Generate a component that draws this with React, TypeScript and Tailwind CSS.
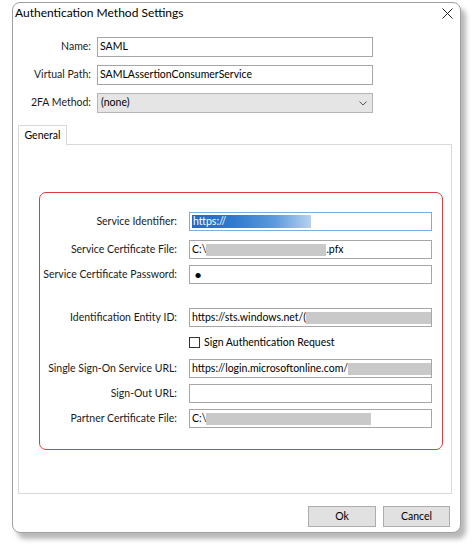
import React from "react";

function Field({ children, focus, gray, w = "w-[243px]", h = "h-[19px]" }: { children?: React.ReactNode; focus?: boolean; gray?: boolean; w?: string; h?: string }) {
  return (
    <div
      className={`${w} ${h} border flex items-center pl-[2px] overflow-hidden whitespace-nowrap text-[10.5px] text-black ${
        focus ? "border-[#7aaee0]" : "border-[#a6a6a6]"
      } ${gray ? "bg-[#e6e6e6]" : "bg-white"}`}
    >
      {children}
    </div>
  );
}

function Blur({ w }: { w: string }) {
  return <span className={`inline-block h-[12px] bg-[#c9c9c9] blur-[0.6px] ${w}`} />;
}

function Row({ label, children, mt }: { label: string; children: React.ReactNode; mt: string }) {
  return (
    <div className={`flex items-center ${mt}`}>
      <div className="w-[137px] text-right text-[10.5px] text-[#1a1a1a] whitespace-nowrap">{label}</div>
      <div className="ml-[12px]">{children}</div>
    </div>
  );
}

function TopRow({ label, children }: { label: string; children: React.ReactNode }) {
  return (
    <div className="flex items-center">
      <div className="w-[78px] text-right text-[10.5px] text-[#1a1a1a] whitespace-nowrap">{label}</div>
      <div className="ml-[6px]">{children}</div>
    </div>
  );
}

export default function App() {
  return (
    <div className="w-[474px] h-[549px] bg-white overflow-hidden pt-[2px] pl-[12px] font-['Lato','Noto_Sans',sans-serif]">
      <div className="w-[449px] h-[531px] border border-[#a0a0a0] rounded-[8px] bg-white shadow-[5px_6px_5px_rgba(0,0,0,0.28)] flex flex-col">
        {/* title bar */}
        <div className="h-[18px] flex items-center justify-between pl-[2px] pr-[6px] pt-[2px]">
          <span className="text-[12px] text-black">Authentication Method Settings</span>
          <svg width="11" height="11" viewBox="0 0 11 11" className="mr-[1px]">
            <path d="M0.5 0.5 L10.5 10.5 M10.5 0.5 L0.5 10.5" stroke="#222" strokeWidth="1" />
          </svg>
        </div>

        {/* top form */}
        <div className="mt-[16px] flex flex-col gap-[8px]">
          <TopRow label="Name:">
            <Field w="w-[276px]" h="h-[20px]">SAML</Field>
          </TopRow>
          <TopRow label="Virtual Path:">
            <Field w="w-[276px]" h="h-[20px]">SAMLAssertionConsumerService</Field>
          </TopRow>
          <TopRow label="2FA Method:">
            <div className="w-[276px] h-[20px] border border-[#b5b5b5] bg-[#e5e5e5] flex items-center justify-between pl-[3px] pr-[5px] text-[10.5px] text-black">
              <span>(none)</span>
              <svg width="8" height="5" viewBox="0 0 8 5">
                <path d="M0.5 0.5 L4 4 L7.5 0.5" stroke="#555" strokeWidth="1" fill="none" />
              </svg>
            </div>
          </TopRow>
        </div>

        {/* tab */}
        <div className="mt-[12px] ml-[5px] flex flex-col">
          <div className="w-[49px] h-[20px] border border-b-0 border-[#d9d9d9] bg-white flex items-center justify-center text-[10.5px] text-black relative z-10 mb-[-1px]">
            General
          </div>
          <div className="w-[434px] h-[350px] border border-[#d9d9d9] bg-white pt-[47px] pl-[20px]">
            <div className="w-[404px] h-[258px] border-[1.5px] border-[#e0393f] rounded-[7px] flex flex-col">
              <Row label="Service Identifier:" mt="mt-[19px]">
                <Field focus>
                  <span className="h-[13px] w-[119px] flex items-center text-white pl-[1px] bg-[linear-gradient(90deg,#1f6cc4_0%,#2f7ad0_35%,#5d9bdc_70%,#b8d2ef_100%)]">
                    https://
                  </span>
                </Field>
              </Row>
              <Row label="Service Certificate File:" mt="mt-[9px]">
                <Field>
                  <span>C:\</span>
                  <Blur w="w-[120px]" />
                  <span>.pfx</span>
                </Field>
              </Row>
              <Row label="Service Certificate Password:" mt="mt-[6px]">
                <Field>
                  <span className="ml-[2px] text-[14px] leading-none">•</span>
                </Field>
              </Row>
              <Row label="Identification Entity ID:" mt="mt-[24px]">
                <Field>
                  <span>https://sts.windows.net/(</span>
                  <Blur w="w-[125px]" />
                </Field>
              </Row>
              <div className="flex items-center mt-[10px] ml-[149px]">
                <span className="w-[11px] h-[11px] border border-[#333] bg-white" />
                <span className="ml-[4px] text-[10.5px] text-black leading-none">Sign Authentication Request</span>
              </div>
              <Row label="Single Sign-On Service URL:" mt="mt-[11px]">
                <Field>
                  <span>https://login.microsoftonline.com/</span>
                  <Blur w="w-[95px]" />
                </Field>
              </Row>
              <Row label="Sign-Out URL:" mt="mt-[6px]">
                <Field />
              </Row>
              <Row label="Partner Certificate File:" mt="mt-[6px]">
                <Field>
                  <span>C:\</span>
                  <Blur w="w-[165px]" />
                </Field>
              </Row>
            </div>
          </div>
        </div>

        {/* buttons */}
        <div className="mt-[12px] flex justify-end gap-[7px] pr-[10px]">
          <button className="w-[68px] h-[21px] border border-[#adadad] bg-[#e1e1e1] text-[10.5px] text-black">Ok</button>
          <button className="w-[67px] h-[21px] border border-[#adadad] bg-[#e1e1e1] text-[10.5px] text-black">Cancel</button>
        </div>
      </div>
    </div>
  );
}
